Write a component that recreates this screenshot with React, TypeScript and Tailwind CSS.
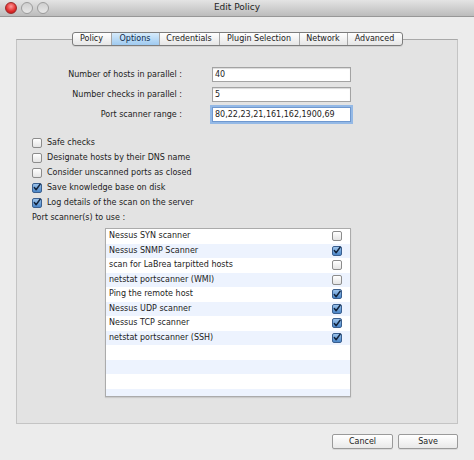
import React from "react";

const font = { fontFamily: '"DejaVu Sans", "Liberation Sans", sans-serif' };

function Check({ checked }: { checked: boolean }) {
  if (checked) {
    return (
      <span className="flex h-[10px] w-[10px] shrink-0 items-center justify-center rounded-[2px] border border-[#3a5f8f] bg-gradient-to-b from-[#9cc3ea] to-[#4a86c8]">
        <svg width="9" height="9" viewBox="0 0 9 9">
          <path d="M1.5 4.5 L3.5 7 L8 0.8" fill="none" stroke="#13243c" strokeWidth="1.6" strokeLinecap="round" strokeLinejoin="round" />
        </svg>
      </span>
    );
  }
  return (
    <span className="block h-[10px] w-[10px] shrink-0 rounded-[2px] border border-[#8c8c8c] bg-gradient-to-b from-[#ffffff] to-[#e4e4e4]" />
  );
}

const tabs = [
  { name: "Policy", w: "w-[38px]" },
  { name: "Options", w: "w-[48px]" },
  { name: "Credentials", w: "w-[60px]" },
  { name: "Plugin Selection", w: "w-[80px]" },
  { name: "Network", w: "w-[48px]" },
  { name: "Advanced", w: "w-[55px]" },
];

const scanners: [string, boolean][] = [
  ["Nessus SYN scanner", false],
  ["Nessus SNMP Scanner", true],
  ["scan for LaBrea tarpitted hosts", false],
  ["netstat portscanner (WMI)", false],
  ["Ping the remote host", true],
  ["Nessus UDP scanner", true],
  ["Nessus TCP scanner", true],
  ["netstat portscanner (SSH)", true],
];

const options: [string, boolean][] = [
  ["Safe checks", false],
  ["Designate hosts by their DNS name", false],
  ["Consider unscanned ports as closed", false],
  ["Save knowledge base on disk", true],
  ["Log details of the scan on the server", true],
];

export default function App() {
  const rows = Array.from({ length: 12 }, (_, i) => scanners[i] ?? null);
  return (
    <div className="flex h-[460px] w-[474px] flex-col overflow-hidden bg-[#ececec] text-[8px] text-[#1c1c1c]" style={font}>
      {/* title bar */}
      <div className="grid h-[17px] shrink-0 grid-cols-[1fr_auto_1fr] items-center border-b border-[#979797] bg-gradient-to-b from-[#e4e4e4] to-[#bcbcbc]">
        <div className="flex items-center gap-[4px] pl-[5px]">
          <span className="block h-[12px] w-[12px] rounded-full border border-[#9a2a2a] bg-[radial-gradient(circle_at_50%_35%,#ff9a9a,#e02b2b_60%,#a81616)]" />
          <span className="block h-[12px] w-[12px] rounded-full border border-[#9c9c9c] bg-gradient-to-b from-[#cfcfcf] to-[#e8e8e8]" />
          <span className="block h-[12px] w-[12px] rounded-full border border-[#9c9c9c] bg-gradient-to-b from-[#cfcfcf] to-[#e8e8e8]" />
        </div>
        <div className="text-[9px] text-[#222]">Edit Policy</div>
        <div />
      </div>

      <div className="flex flex-col px-[16px]">
        {/* tabs */}
        <div className="relative z-10 mt-[15px] -mb-[7px] flex justify-center">
          <div className="flex h-[14px] overflow-hidden rounded-[3px] border border-[#7c7c7c] bg-gradient-to-b from-[#ffffff] to-[#e6e6e6] shadow-[0_1px_0_rgba(0,0,0,0.08)]">
            {tabs.map((t, i) => (
              <div
                key={t.name}
                className={`${t.w} flex items-center justify-center ${i > 0 ? "border-l border-[#a6a6a6]" : ""} ${
                  t.name === "Options" ? "bg-gradient-to-b from-[#d6ebfb] to-[#9fcaf0] text-[#0f2a4a]" : ""
                }`}
              >
                {t.name}
              </div>
            ))}
          </div>
        </div>

        {/* panel */}
        <div className="flex h-[385px] flex-col border border-[#c4c4c4] border-t-[#a9a9a9] bg-[#e3e3e3] pt-[27px]">
          <div className="grid grid-cols-[165px_139px] gap-x-[30px] gap-y-[5px]">
            <div className="flex h-[15px] items-center justify-end">Number of hosts in parallel :</div>
            <div className="flex h-[15px] items-center border border-[#a3a3a3] bg-white pl-[2px] shadow-[inset_0_1px_1px_rgba(0,0,0,0.15)]">40</div>
            <div className="flex h-[15px] items-center justify-end">Number checks in parallel :</div>
            <div className="flex h-[15px] items-center border border-[#a3a3a3] bg-white pl-[2px] shadow-[inset_0_1px_1px_rgba(0,0,0,0.15)]">5</div>
            <div className="flex h-[15px] items-center justify-end">Port scanner range :</div>
            <div className="flex h-[15px] items-center border border-[#6f98cf] bg-white pl-[2px] shadow-[0_0_0_2px_#94b9e6]">80,22,23,21,161,162,1900,69</div>
          </div>

          <div className="mt-[13px] flex flex-col pl-[15px]">
            {options.map(([label, c]) => (
              <div key={label} className="flex h-[15px] items-center gap-[5px]">
                <Check checked={c} />
                <span>{label}</span>
              </div>
            ))}
            <div className="flex h-[15px] items-center">Port scanner(s) to use :</div>
          </div>

          <div className="ml-[88px] mt-[3px] h-[169px] w-[246px] overflow-hidden border border-[#ababab] bg-white shadow-[0_1px_1px_rgba(0,0,0,0.1)]">
            {rows.map((r, i) => (
              <div
                key={i}
                className={`flex h-[14.5px] items-center justify-between pl-[3px] pr-[8px] ${i % 2 === 1 ? "bg-[#edf3fe]" : "bg-white"}`}
              >
                {r ? (
                  <>
                    <span>{r[0]}</span>
                    <Check checked={r[1]} />
                  </>
                ) : null}
              </div>
            ))}
          </div>
        </div>

        {/* buttons */}
        <div className="mt-[10px] flex justify-end gap-[5px]">
          <button className="flex h-[15px] w-[61px] items-center justify-center rounded-[2px] border border-[#9a9a9a] bg-gradient-to-b from-[#ffffff] to-[#e9e9e9] shadow-[0_1px_0_rgba(0,0,0,0.08)]">
            Cancel
          </button>
          <button className="flex h-[15px] w-[60px] items-center justify-center rounded-[2px] border border-[#9a9a9a] bg-gradient-to-b from-[#ffffff] to-[#e9e9e9] shadow-[0_1px_0_rgba(0,0,0,0.08)]">
            Save
          </button>
        </div>
      </div>
    </div>
  );
}
